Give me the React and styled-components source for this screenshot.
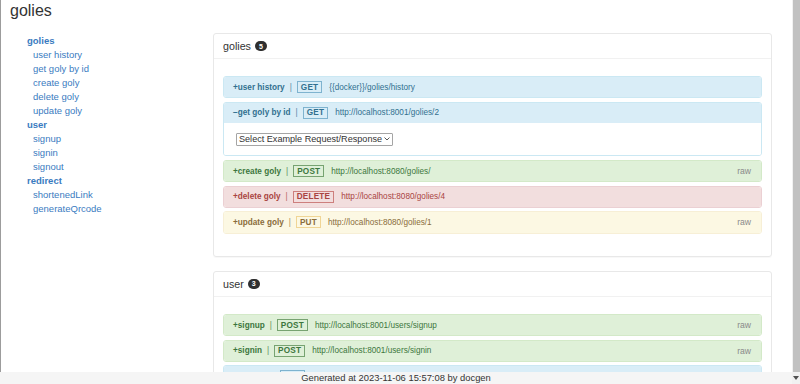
import React from 'react';
import styled, { createGlobalStyle } from 'styled-components';

const GlobalStyle = createGlobalStyle`
  html, body {
    margin: 0;
    padding: 0;
    height: 100%;
    overflow: hidden;
    background: #fff;
  }
  body {
    font-family: "Liberation Sans", Arial, Helvetica, sans-serif;
    color: #333;
  }
`;

const tones = {
  info: { bg: '#d9edf7', border: '#cbe8f3', text: '#31708f', box: '#7eb3cf' },
  success: { bg: '#dff0d8', border: '#d3e9c8', text: '#3c763d', box: '#77a371' },
  danger: { bg: '#f2dede', border: '#ebd0d3', text: '#a94442', box: '#cd7f7d' },
  warning: { bg: '#fcf8e3', border: '#f7efd6', text: '#8a6d3b', box: '#f0d595' },
};

const methodTone = { GET: 'info', POST: 'success', DELETE: 'danger', PUT: 'warning' };

const groups = [
  {
    name: 'golies',
    items: [
      { title: 'user history', method: 'GET', url: '{{docker}}/golies/history' },
      { title: 'get goly by id', method: 'GET', url: 'http://localhost:8001/golies/2', open: true },
      { title: 'create goly', method: 'POST', url: 'http://localhost:8080/golies/', raw: true },
      { title: 'delete goly', method: 'DELETE', url: 'http://localhost:8080/golies/4' },
      { title: 'update goly', method: 'PUT', url: 'http://localhost:8080/golies/1', raw: true },
    ],
  },
  {
    name: 'user',
    items: [
      { title: 'signup', method: 'POST', url: 'http://localhost:8001/users/signup', raw: true },
      { title: 'signin', method: 'POST', url: 'http://localhost:8001/users/signin', raw: true },
      { title: 'signout', method: 'GET', url: 'http://localhost:8001/users/signout' },
    ],
  },
  {
    name: 'redirect',
    items: [
      { title: 'shortenedLink', method: 'GET', url: 'http://localhost:8001/' },
      { title: 'generateQrcode', method: 'GET', url: 'http://localhost:8001/qr' },
    ],
  },
];

const Page = styled.div`
  display: flex;
  height: 384px;
  border-left: 1px solid #9c9c9c;
  box-sizing: border-box;
`;

const Main = styled.div`
  flex: 1;
  min-width: 0;
  height: calc(100% - 12.3px);
  overflow: hidden;
`;

const Title = styled.h1`
  margin: 0;
  height: 33px;
  padding: 3px 0 0 9px;
  box-sizing: border-box;
  font-size: 16px;
  line-height: 16px;
  font-weight: normal;
  color: #333;
`;

const Columns = styled.div`
  display: grid;
  grid-template-columns: 212px 1fr;
  padding-right: 20px;
`;

const Nav = styled.nav`
  padding: 0.5px 0 0 26px;
  font-size: 9.5px;
  line-height: 14px;
`;

const NavHead = styled.div`
  font-weight: bold;
  color: #3a7bbf;
`;

const NavItem = styled.div`
  padding-left: 6px;
  color: #3a7bbf;
`;

const Panels = styled.div`
  display: flex;
  flex-direction: column;
  gap: 14px;
`;

const Panel = styled.section`
  border: 1px solid #e8e8e8;
  border-radius: 3px;
  box-shadow: 0 1px 1px rgba(0, 0, 0, 0.03);
`;

const PanelHead = styled.div`
  display: flex;
  align-items: center;
  gap: 4px;
  height: 24px;
  padding: 0 9px;
  border-bottom: 1px solid #f1f1f1;
  font-size: 10.7px;
`;

const Badge = styled.span`
  display: inline-flex;
  align-items: center;
  justify-content: center;
  min-width: 12px;
  height: 10px;
  border-radius: 6px;
  background: #2f2f2f;
  color: #fff;
  font-size: 7px;
  font-weight: bold;
`;

const PanelBody = styled.div`
  padding: 17px 9px 19px;
`;

const Row = styled.div`
  border: 1px solid ${({ $tone }) => tones[$tone].border};
  border-radius: 3px;
  margin-bottom: 3.4px;
  overflow: hidden;
`;

const RowHead = styled.div`
  display: flex;
  align-items: center;
  height: 20.3px;
  padding: 0 10px 0 9px;
  background: ${({ $tone }) => tones[$tone].bg};
  color: ${({ $tone }) => tones[$tone].text};
  font-size: 8.2px;
`;

const RowTitle = styled.span`
  font-weight: bold;
`;

const Sep = styled.span`
  margin: 0 5px;
  opacity: 0.8;
`;

const Method = styled.span`
  display: inline-flex;
  align-items: center;
  height: 10px;
  padding: 0 3px;
  border: 1px solid ${({ $tone }) => tones[$tone].box};
  font-weight: bold;
  letter-spacing: 0.2px;
`;

const Url = styled.span`
  margin-left: 7px;
  flex: 1;
`;

const Raw = styled.span`
  color: #8a8a8a;
  font-size: 8.6px;
`;

const RowBody = styled.div`
  background: #fff;
  padding: 10px 12px 0;
  height: 32.5px;
  box-sizing: border-box;
`;

const SelectWrap = styled.div`
  position: relative;
  width: 157px;
  height: 13px;
`;

const Select = styled.select`
  appearance: none;
  display: block;
  box-sizing: border-box;
  width: 100%;
  height: 13px;
  margin: 0;
  padding: 0 9px 0 2px;
  font-family: "Liberation Sans", Arial, sans-serif;
  font-size: 9.1px;
  line-height: 11px;
  border: 1px solid #a5a5a5;
  border-radius: 1px;
  background: #fff;
  color: #333;
  outline: none;
`;

const Chevron = styled.svg`
  position: absolute;
  right: 3px;
  top: 4.5px;
  pointer-events: none;
`;

const Footer = styled.footer`
  position: fixed;
  left: 0;
  right: 8px;
  bottom: 0;
  height: 12.3px;
  background: #f5f5f5;
  font-size: 9.4px;
  line-height: 12.3px;
  text-align: center;
  color: #333;
`;

const Rail = styled.div`
  width: 8px;
  display: flex;
  flex-direction: column;
  background: #f1f1f1;
`;

const Thumb = styled.div`
  flex: 1;
  background: #c1c1c1;
  margin-left: 1px;
`;

const RailButton = styled.div`
  height: 12.3px;
  display: flex;
  align-items: center;
  justify-content: center;
`;

function Endpoint({ item }) {
  const tone = methodTone[item.method];
  return (
    <Row $tone={tone}>
      <RowHead $tone={tone}>
        <RowTitle>{item.open ? '\u2212' : '+'}{item.title}</RowTitle>
        <Sep>|</Sep>
        <Method $tone={tone}>{item.method}</Method>
        <Url>{item.url}</Url>
        {item.raw && <Raw>raw</Raw>}
      </RowHead>
      {item.open && (
        <RowBody>
          <SelectWrap>
            <Select defaultValue="">
              <option value="">Select Example Request/Response</option>
            </Select>
            <Chevron width="6" height="4" viewBox="0 0 6 4">
              <path d="M0.5 0.5L3 3L5.5 0.5" fill="none" stroke="#444" strokeWidth="0.9" />
            </Chevron>
          </SelectWrap>
        </RowBody>
      )}
    </Row>
  );
}

export default function App() {
  return (
    <>
      <GlobalStyle />
      <Page>
        <Main>
          <Title>golies</Title>
          <Columns>
            <Nav>
              {groups.map((g) => (
                <div key={g.name}>
                  <NavHead>{g.name}</NavHead>
                  {g.items.map((it) => (
                    <NavItem key={it.title}>{it.title}</NavItem>
                  ))}
                </div>
              ))}
            </Nav>
            <Panels>
              {groups.map((g) => (
                <Panel key={g.name}>
                  <PanelHead>
                    {g.name}
                    <Badge>{g.items.length}</Badge>
                  </PanelHead>
                  <PanelBody>
                    {g.items.map((it) => (
                      <Endpoint key={it.title} item={it} />
                    ))}
                  </PanelBody>
                </Panel>
              ))}
            </Panels>
          </Columns>
        </Main>
        <Rail>
          <Thumb />
          <RailButton>
            <svg width="6" height="4" viewBox="0 0 6 4">
              <path d="M0 0H6L3 4Z" fill="#505050" />
            </svg>
          </RailButton>
        </Rail>
      </Page>
      <Footer>Generated at 2023-11-06 15:57:08 by docgen</Footer>
    </>
  );
}
